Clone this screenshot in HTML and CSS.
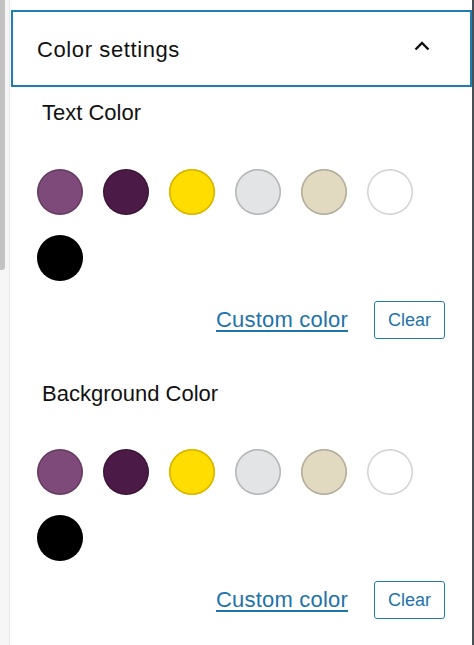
FILE: index.html
```html
<!DOCTYPE html>
<html lang="en">
<head>
<meta charset="utf-8">
<title>Color settings</title>
<link rel="stylesheet" href="styles.css">
</head>
<body>
<div class="app">
  <div class="track"><div class="thumb"></div></div>
  <div class="panel">
    <button class="header" type="button">
      <span class="title">Color settings</span>
      <svg class="chevron" width="16" height="10" viewBox="0 0 16 10" aria-hidden="true">
        <polyline points="1.5,8.5 8,2 14.5,8.5" fill="none" stroke="#111" stroke-width="2.4"/>
      </svg>
    </button>
    <div class="content">
      <section class="group">
        <div class="label">Text Color</div>
        <div class="swatches">
          <span class="swatch c-purple"></span>
          <span class="swatch c-plum"></span>
          <span class="swatch c-yellow"></span>
          <span class="swatch c-grey"></span>
          <span class="swatch c-beige"></span>
          <span class="swatch c-white"></span>
          <span class="swatch c-black"></span>
        </div>
        <div class="actions">
          <a class="custom" href="#">Custom color</a>
          <button class="clear" type="button">Clear</button>
        </div>
      </section>
      <section class="group">
        <div class="label">Background Color</div>
        <div class="swatches">
          <span class="swatch c-purple"></span>
          <span class="swatch c-plum"></span>
          <span class="swatch c-yellow"></span>
          <span class="swatch c-grey"></span>
          <span class="swatch c-beige"></span>
          <span class="swatch c-white"></span>
          <span class="swatch c-black"></span>
        </div>
        <div class="actions">
          <a class="custom" href="#">Custom color</a>
          <button class="clear" type="button">Clear</button>
        </div>
      </section>
    </div>
  </div>
  <div class="edge"></div>
</div>
</body>
</html>
```

FILE: styles.css
```css
* { box-sizing: border-box; }
html, body { margin: 0; padding: 0; background: #fff; }
body {
  font-family: "Liberation Sans", Arial, sans-serif;
  color: #111;
  width: 474px;
  height: 645px;
  overflow: hidden;
}
.app {
  display: flex;
  height: 645px;
}
.track {
  width: 10px;
  flex: none;
  background: #f6f6f6;
  border-right: 1px solid #e6e6e6;
}
.thumb {
  width: 5px;
  height: 270px;
  background: #c2c2c2;
  border-radius: 0 0 3px 0;
}
.panel {
  flex: 1;
  min-width: 0;
  padding: 10px 0 0 1px;
}
.edge {
  width: 2px;
  flex: none;
  background: #4a4f54;
}
.header {
  width: 100%;
  height: 77px;
  display: flex;
  align-items: center;
  justify-content: space-between;
  padding: 0 40px 0 24px;
  background: #fff;
  border: 2px solid #1e7db4;
  font-family: inherit;
  cursor: pointer;
}
.title {
  font-size: 22px;
  letter-spacing: 0.6px;
  color: #111;
  margin-top: 2px;
}
.chevron { display: block; margin-top: -6px; }
.content {
  padding: 13px 27px 0 26px;
}
.label {
  font-size: 22px;
  line-height: 26px;
  padding-left: 5px;
}
.swatches {
  display: flex;
  flex-wrap: wrap;
  gap: 20px;
  margin-top: 43px;
  width: 420px;
}
.swatch {
  width: 46px;
  height: 46px;
  border-radius: 50%;
  box-shadow: inset 0 0 0 1.5px rgba(0, 0, 0, 0.2);
}
.c-purple { background: #7e4a7a; }
.c-plum { background: #4b1a47; }
.c-yellow { background: #ffdd00; box-shadow: inset 0 0 0 1.5px #d2b300; }
.c-grey { background: #e2e4e6; box-shadow: inset 0 0 0 1.5px #b4b4b4; }
.c-beige { background: #e2d9c1; box-shadow: inset 0 0 0 1.5px #b2ab99; }
.c-white { background: #fff; box-shadow: inset 0 0 0 1.5px #d2d2d2; }
.c-black { background: #000; }
.actions {
  display: flex;
  justify-content: flex-end;
  align-items: center;
  gap: 26px;
  margin-top: 20px;
}
.custom {
  font-size: 22px;
  letter-spacing: 0.2px;
  color: #1e73a9;
  text-decoration: underline;
  text-underline-offset: 3px;
  text-decoration-thickness: 1.5px;
}
.clear {
  width: 71px;
  height: 38px;
  border: 1.5px solid #1e7db4;
  border-radius: 3px;
  background: #fff;
  color: #1e73a9;
  font-family: inherit;
  font-size: 18px;
  padding: 0;
}
.group + .group .label { margin-top: 42px; }
.group + .group .swatches { margin-top: 42px; }
```
